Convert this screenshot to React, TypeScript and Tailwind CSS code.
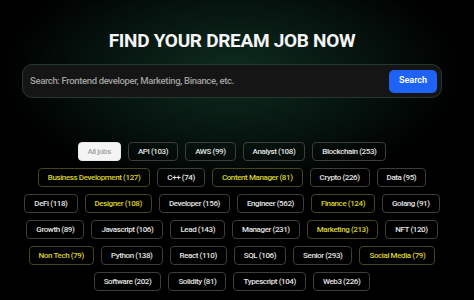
import React from 'react';

type Tag = { label: string; count?: number; hot?: boolean; active?: boolean };

const tags: Tag[] = [
  { label: 'All jobs', active: true },
  { label: 'API', count: 103 },
  { label: 'AWS', count: 99 },
  { label: 'Analyst', count: 108 },
  { label: 'Blockchain', count: 253 },
  { label: 'Business Development', count: 127, hot: true },
  { label: 'C++', count: 74 },
  { label: 'Content Manager', count: 81, hot: true },
  { label: 'Crypto', count: 226 },
  { label: 'Data', count: 95 },
  { label: 'DeFi', count: 118 },
  { label: 'Designer', count: 108, hot: true },
  { label: 'Developer', count: 156 },
  { label: 'Engineer', count: 562 },
  { label: 'Finance', count: 124, hot: true },
  { label: 'Golang', count: 91 },
  { label: 'Growth', count: 89 },
  { label: 'Javascript', count: 106 },
  { label: 'Lead', count: 143 },
  { label: 'Manager', count: 231 },
  { label: 'Marketing', count: 213, hot: true },
  { label: 'NFT', count: 120 },
  { label: 'Non Tech', count: 79, hot: true },
  { label: 'Python', count: 138 },
  { label: 'React', count: 110 },
  { label: 'SQL', count: 106 },
  { label: 'Senior', count: 293 },
  { label: 'Social Media', count: 79, hot: true },
  { label: 'Software', count: 202 },
  { label: 'Solidity', count: 81 },
  { label: 'Typescript', count: 104 },
  { label: 'Web3', count: 226 },
];

function Chip({ tag }: { tag: Tag }) {
  const text = tag.count === undefined ? tag.label : `${tag.label} (${tag.count})`;
  if (tag.active) {
    return (
      <span className="flex h-[19px] items-center rounded-[4px] border border-[#e8e8e8] bg-[#f4f4f4] px-[9px] text-[8px] font-medium tracking-[-0.4px] text-[#a0a0a0]">
        {text}
      </span>
    );
  }
  return (
    <span
      className={
        tag.hot
          ? 'flex h-[19px] items-center rounded-[4px] border border-[#47451f] px-[9px] text-[8px] font-medium tracking-[-0.4px] text-[#dcd32c]'
          : 'flex h-[19px] items-center rounded-[4px] border border-[#3d3d3d] px-[9px] text-[8px] font-medium tracking-[-0.4px] text-[#e4e4e4]'
      }
    >
      {text}
    </span>
  );
}

export default function App() {
  return (
    <div className="h-[300px] w-[474px] overflow-hidden bg-black bg-[radial-gradient(ellipse_230px_120px_at_232px_72px,#0e2c20_0%,#06150f_55%,#000_100%)] font-['Roboto',sans-serif]">
      <div className="ml-[22px] w-[420px] pt-[31px]">
        <h1 className="text-center text-[19px] font-bold leading-[19px] tracking-[-0.3px] text-[#f5f5f5]">
          FIND YOUR DREAM JOB NOW
        </h1>
        <div className="mt-[14px] flex h-[34px] items-center rounded-[10px] border border-[#24382d] bg-[#141514] pl-[7px] pr-[4px]">
          <span className="flex-1 text-[9.5px] font-medium tracking-[-0.35px] text-[#a0a0a0]">
            Search: Frontend developer, Marketing, Binance, etc.
          </span>
          <button className="h-[23px] w-[48px] rounded-[5px] bg-[#1f63f6] text-[9px] font-semibold text-white">
            Search
          </button>
        </div>
        <div className="mt-[44px] flex flex-wrap justify-center gap-x-[7px] gap-y-[7px]">
          {tags.map((t) => (
            <Chip key={t.label} tag={t} />
          ))}
        </div>
      </div>
    </div>
  );
}
